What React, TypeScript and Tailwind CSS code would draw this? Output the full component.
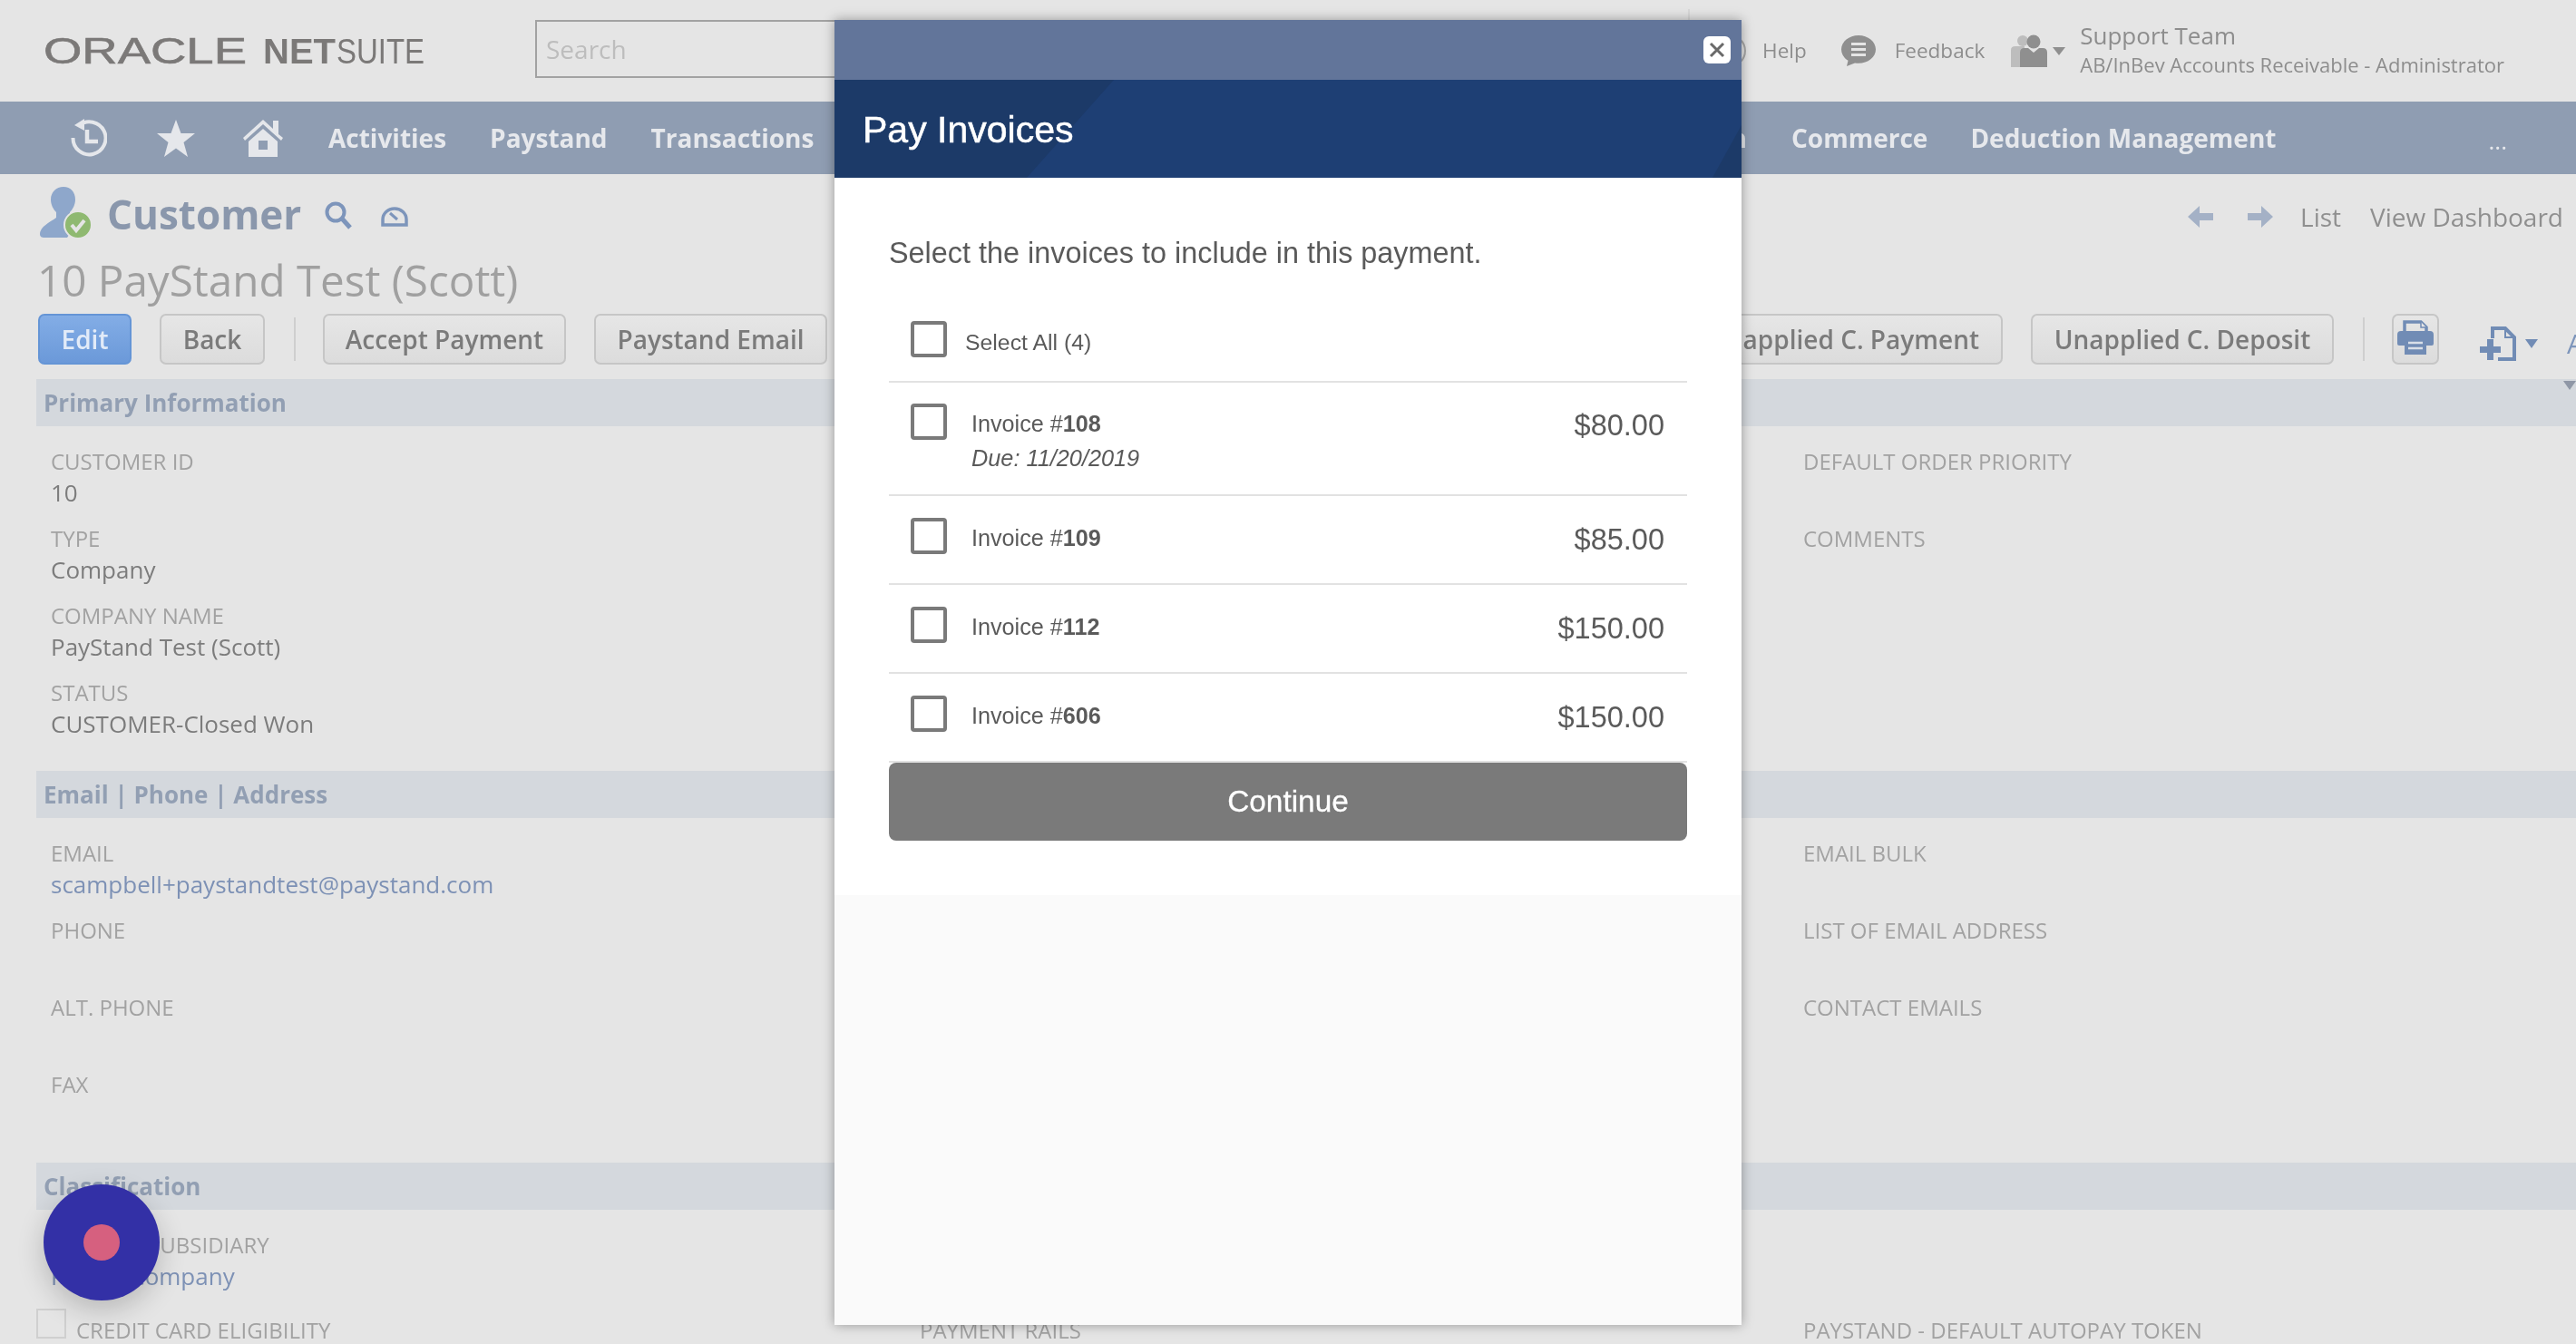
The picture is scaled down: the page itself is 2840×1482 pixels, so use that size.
import React from "react";

const sans = "font-['Open_Sans',sans-serif]";
const hel = "font-['Liberation_Sans',Arial,sans-serif]";

function Field({ label, value, link }: { label?: string; value?: string; link?: boolean }) {
  return (
    <div className="h-[85px]">
      <div className="h-[34px] text-[24px] leading-[34px] text-[#a2a2a2] whitespace-nowrap">{label}</div>
      <div className={`h-[34px] text-[26px] leading-[34px] whitespace-nowrap ${link ? "text-[#7d91b5]" : "text-[#7c7c7c]"}`}>{value}</div>
    </div>
  );
}

function Section({ title }: { title: string }) {
  return (
    <div className="ml-[40px] h-[52px] pl-[8px] flex items-center bg-[#d4d8dd] text-[26px] font-bold text-[#929fb3]">{title}</div>
  );
}

function Btn({ children, className = "" }: { children: React.ReactNode; className?: string }) {
  return (
    <div className={`h-[56px] shrink-0 flex items-center justify-center rounded-[7px] border-2 border-[#c6c6c6] bg-gradient-to-b from-[#e6e6e6] to-[#dcdcdc] text-[28px] font-semibold text-[#7b7b7b] whitespace-nowrap ${className}`}>
      {children}
    </div>
  );
}

function Check() {
  return <div className="w-[40px] h-[40px] shrink-0 rounded-[4px] border-[4px] border-[#7a7a7a] bg-white" />;
}

function Invoice({ no, amount, due }: { no: string; amount: string; due?: string }) {
  return (
    <div className={`flex justify-between pl-[24px] pr-[25px] border-b-2 border-[#e2e2e2] ${due ? "h-[125px] pt-[23px]" : "h-[98px] pt-[24px]"}`}>
      <div className="flex">
        <Check />
        <div className="ml-[27px]">
          <div className="h-[44px] text-[25.2px] leading-[44px] text-[#5a5a5a]">
            Invoice #<b className="font-bold">{no}</b>
          </div>
          {due && <div className="text-[25.3px] leading-[30px] italic text-[#5a5a5a] mt-[1px]">{due}</div>}
        </div>
      </div>
      <div className="text-[32.500px] leading-[50px] text-[#5a5a5a] mt-[-1px]">{amount}</div>
    </div>
  );
}

export default function App() {
  return (
    <div className={`relative w-[2840px] h-[1482px] overflow-hidden bg-[#e5e5e5] blur-[0.5px] ${sans}`}>
      {/* top bar */}
      <div className="h-[112px] flex items-center pl-[48px] pr-[79px]">
        <svg width="422" height="50" viewBox="0 0 422 50" className="shrink-0 mt-[-2px]">
          <text x="0" y="40" fontFamily="Liberation Sans" fontSize="40" fill="#7b7978" stroke="#7b7978" strokeWidth="0.6" textLength="224" lengthAdjust="spacingAndGlyphs">ORACLE</text>
          <text x="242" y="40" fontFamily="Liberation Sans" fontWeight="700" fontSize="38" fill="#7b7978" textLength="80" lengthAdjust="spacingAndGlyphs">NET</text>
          <text x="323" y="40" fontFamily="Liberation Sans" fontSize="38" fill="#7b7978" textLength="97" lengthAdjust="spacingAndGlyphs">SUITE</text>
        </svg>
        <div className="ml-[120px] w-[600px] h-[64px] mt-[-4px] border-2 border-[#a2a2a2] pl-[10px] flex items-center text-[28px] text-[#bdbdbd]">Search</div>
        <div className="ml-auto flex items-center">
          <div className="w-[2px] h-[92px] bg-[#d8d8d8] mr-[26px]" />
          <div className="w-[36px] h-[36px] rounded-full border-2 border-[#a8a8a8] mr-[18px]" />
          <div className="text-[22.500px] text-[#8d8d8d]">Help</div>
          <svg width="38" height="34" viewBox="0 0 38 34" className="ml-[38px]">
            <path d="M19 0C8.500 0 0 7 0 15.500c0 5 3 9.500 7.500 12.300L6 34l9-3.500c1.300.200 2.700.300 4 .300 10.500 0 19-6.800 19-15.300S29.500 0 19 0z" fill="#8f8f8f" />
            <path d="M11 9.500h16M11 15.500h16M11 21.500h16" stroke="#e5e5e5" strokeWidth="3" />
          </svg>
          <div className="ml-[21px] text-[22.500px] text-[#8d8d8d]">Feedback</div>
          <svg width="62" height="36" viewBox="0 0 62 36" className="ml-[29px]">
            <circle cx="13" cy="7" r="6" fill="#bdbdbd" />
            <path d="M0 17q0-4 5-4h10v23H0z" fill="#bdbdbd" />
            <circle cx="25" cy="8" r="7.500" fill="#8f8f8f" />
            <path d="M10 36V20q0-5 5-5h4l6 5 6-5h4q5 0 5 5v16z" fill="#8f8f8f" />
            <path d="M46 14h14l-7 9z" fill="#8f8f8f" />
          </svg>
          <div className="ml-[14px] mt-[-5px]">
            <div className="text-[26px] leading-[34px] text-[#8d8d8d]">Support Team</div>
            <div className="text-[22px] leading-[30px] text-[#8d8d8d]">AB/InBev Accounts Receivable - Administrator</div>
          </div>
        </div>
      </div>

      {/* nav */}
      <div className="h-[80px] bg-[#8f9db2] flex items-center pl-[78px] text-[28px] font-bold text-[#e6e8ec] whitespace-nowrap">
        <svg width="40" height="42" viewBox="0 0 40 42" className="shrink-0">
          <path d="M9 7.500A18 18 0 1 1 2.500 21" fill="none" stroke="#e5e7eb" strokeWidth="4" />
          <path d="M15 0v13L4 7z" fill="#e5e7eb" />
          <path d="M18 12v13h12" fill="none" stroke="#e5e7eb" strokeWidth="4.500" />
        </svg>
        <svg width="42" height="41" viewBox="0 0 42 41" className="ml-[55px] shrink-0">
          <path d="M21 0l5.500 15H42L29.500 25 34 41 21 31.500 8 41l4.500-16L0 15h15.500z" fill="#e5e7eb" />
        </svg>
        <svg width="46" height="42" viewBox="0 0 46 42" className="ml-[52px] shrink-0">
          <path d="M1 21L23 1l11 10V2h6v15l5 4-2 3L23 6 3 24z" fill="#e5e7eb" />
          <path d="M7 25L23 11l16 14v17H7z" fill="#e5e7eb" />
          <rect x="18" y="24" width="10" height="10" fill="#8f9db2" />
        </svg>
        <div className="ml-[49px] flex gap-[48px]">
          <span>Activities</span>
          <span>Paystand</span>
          <span>Transactions</span>
        </div>
        <div className="ml-auto flex gap-[47px] pr-[76px] items-center w-[865px] shrink-0">
          <span className="w-[210px] ml-[-259px] mr-[2px] text-right shrink-0">Customization</span>
          <span>Commerce</span>
          <span>Deduction Management</span>
          <span className="ml-auto font-normal text-[26px] leading-[24px] mt-[5px]">...</span>
        </div>
      </div>

      {/* record header */}
      <div className="h-[88px] flex items-center pl-[44px] pr-[14px]">
        <svg width="58" height="58" viewBox="0 0 58 58" className="shrink-0 mt-[-2px]">
          <path d="M26 0c8 0 13 6 13 14 0 6-3 11-6 14v4c4 2 8 3 10 6L30 56H5c-3 0-5-1-5-4 0-8 11-13 18-18v-6c-3-3-6-8-6-14C12 6 18 0 26 0z" fill="#8ea7cb" />
          <circle cx="42" cy="42" r="15" fill="#8fb971" stroke="#e5e5e5" strokeWidth="2" />
          <path d="M35 42l5 6 9-11" fill="none" stroke="#e5e5e5" strokeWidth="4" />
        </svg>
        <div className="ml-[16px] text-[44px] font-bold text-[#8a97ac]">Customer</div>
        <svg width="30" height="31" viewBox="0 0 30 31" className="ml-[26px] mt-[2px]">
          <circle cx="12" cy="12" r="9.500" fill="none" stroke="#7d95bb" strokeWidth="4" />
          <path d="M19 19l9 10" stroke="#7d95bb" strokeWidth="5" />
        </svg>
        <svg width="30" height="22" viewBox="0 0 30 22" className="ml-[32px] mt-[6px]">
          <path d="M2 20v-6a13 12 0 0 1 26 0v6z" fill="none" stroke="#7d95bb" strokeWidth="3.500" />
          <path d="M10 7l8 7" stroke="#7d95bb" strokeWidth="3" />
        </svg>
        <div className="ml-auto flex items-center text-[28px] text-[#8f8f8f] mt-[6px]">
          <svg width="28" height="24" viewBox="0 0 28 24"><path d="M13 0L0 12l13 12v-8h15V8H13z" fill="#a4b1c6" /></svg>
          <svg width="28" height="24" viewBox="0 0 28 24" className="ml-[38px]"><path d="M15 0l13 12-13 12v-8H0V8h15z" fill="#a4b1c6" /></svg>
          <span className="ml-[30px]">List</span>
          <span className="ml-[32px]">View Dashboard</span>
        </div>
      </div>
      <div className="h-[60px] pl-[41px] pb-[3px] flex items-center text-[47.600px] text-[#a0a0a0] whitespace-nowrap">10 PayStand Test (Scott)</div>

      {/* buttons */}
      <div className="mt-[6px] h-[56px] flex pl-[42px]">
        <Btn className="w-[103px] !border-[#6595d6] !from-[#83ade6] !to-[#6b99d9] !text-[#e2ebf8]">Edit</Btn>
        <Btn className="w-[116px] ml-[31px]">Back</Btn>
        <div className="ml-[32px] mt-[4px] w-[2px] h-[48px] bg-[#cfcfcf] shrink-0" />
        <Btn className="w-[268px] ml-[30px]">Accept Payment</Btn>
        <Btn className="w-[257px] ml-[31px]">Paystand Email</Btn>
        <Btn className="w-[330px] ml-[966px] !justify-end pr-[24px]">Unapplied C. Payment</Btn>
        <Btn className="w-[334px] ml-[31px]">Unapplied C. Deposit</Btn>
        <div className="ml-[32px] mt-[4px] w-[2px] h-[48px] bg-[#cfcfcf] shrink-0" />
        <Btn className="w-[52px] ml-[30px] items-start">
          <svg width="40" height="38" viewBox="0 0 40 38" className="mt-[5px]">
            <path d="M8 2V14h24V8l-6-6z" fill="none" stroke="#718cb5" strokeWidth="3.500" />
            <path d="M26 2v6h6" fill="#e5e5e5" stroke="#718cb5" strokeWidth="1.500" />
            <path d="M4 12h32q4 0 4 4v10q0 2-2 2h-6v-8H8v8H2q-2 0-2-2V16q0-4 4-4z" fill="#718cb5" />
            <path d="M8 19h24v19H8z" fill="#718cb5" />
            <path d="M12 25h16M12 31h16" stroke="#d9dfe8" strokeWidth="2.500" />
          </svg>
        </Btn>
        <svg width="66" height="38" viewBox="0 0 66 38" className="ml-[45px] mt-[14px] shrink-0">
          <path d="M14 13V2h14l10 10v24H20" fill="none" stroke="#718cb5" strokeWidth="4" />
          <path d="M28 2v10h10" fill="none" stroke="#718cb5" strokeWidth="2" />
          <path d="M8 14v8H0v7h8v8h7v-8h8v-7h-8v-8z" fill="#718cb5" />
          <path d="M50 14h14l-7 10z" fill="#718cb5" />
        </svg>
        <div className="ml-[30px] mt-[10px] text-[30px] text-[#7d95bb] whitespace-nowrap shrink-0">Actions</div>
      </div>

      {/* sections */}
      <div className="mt-[16px]">
        <div className="relative">
          <Section title="Primary Information" />
          <svg width="14" height="10" viewBox="0 0 14 10" className="absolute right-0 top-[2px]"><path d="M0 0h14l-7 10z" fill="#8f97a6" /></svg>
        </div>
        <div className="pl-[56px] pt-[22px] grid grid-cols-[958px_974px_1fr] h-[380px]">
          <div>
            <Field label="CUSTOMER ID" value="10" />
            <Field label="TYPE" value="Company" />
            <Field label="COMPANY NAME" value="PayStand Test (Scott)" />
            <Field label="STATUS" value="CUSTOMER-Closed Won" />
          </div>
          <div />
          <div>
            <Field label="DEFAULT ORDER PRIORITY" />
            <Field label="COMMENTS" />
          </div>
        </div>
        <Section title="Email | Phone | Address" />
        <div className="pl-[56px] pt-[22px] grid grid-cols-[958px_974px_1fr] h-[380px]">
          <div>
            <Field label="EMAIL" value="scampbell+paystandtest@paystand.com" link />
            <Field label="PHONE" />
            <Field label="ALT. PHONE" />
            <Field label="FAX" />
          </div>
          <div />
          <div>
            <Field label="EMAIL BULK" />
            <Field label="LIST OF EMAIL ADDRESS" />
            <Field label="CONTACT EMAILS" />
          </div>
        </div>
        <Section title="Classification" />
        <div className="pl-[56px] pt-[22px] grid grid-cols-[958px_974px_1fr]">
          <div>
            <Field label="PRIMARY SUBSIDIARY" value="Parent Company" link />
            <div className="flex ml-[-16px] mt-[2px]">
              <div className="w-[33px] h-[33px] border-2 border-[#cfcfcf] shrink-0" />
              <div className="ml-[11px] mt-[7px] text-[24px] leading-[34px] text-[#a2a2a2] whitespace-nowrap">CREDIT CARD ELIGIBILITY</div>
            </div>
          </div>
          <div className="pt-[94px] text-[24px] leading-[34px] text-[#a2a2a2]">PAYMENT RAILS</div>
          <div className="pt-[94px] text-[24px] leading-[34px] text-[#a2a2a2] whitespace-nowrap">PAYSTAND - DEFAULT AUTOPAY TOKEN</div>
        </div>
      </div>

      {/* modal */}
      <div className={`absolute left-[920px] top-[22px] w-[1000px] h-[1439px] flex flex-col bg-[#fafafa] shadow-[0_0_12px_rgba(0,0,0,0.35)] ${hel}`}>
        <div className="relative h-[66px] shrink-0 bg-[#62759a]">
          <div className="absolute left-[958px] top-[18px] w-[30px] h-[30px] rounded-[6px] bg-white flex items-center justify-center">
            <svg width="20" height="20" viewBox="0 0 20 20"><path d="M3 3l14 14M17 3L3 17" stroke="#6a6a6a" strokeWidth="3" /></svg>
          </div>
        </div>
        <div className="relative h-[108px] shrink-0 bg-[#1e3f74] flex items-center overflow-hidden">
          <svg width="1000" height="108" viewBox="0 0 1000 108" className="absolute left-0 top-0">
            <path d="M0 0H308L212 108H0z" fill="#1c3a68" />
            <path d="M1000 50V108H968z" fill="#1c3a68" />
          </svg>
          <div className="relative pl-[31px] mt-[3px] text-[41px] text-white [-webkit-text-stroke:0.5px_white]">Pay Invoices</div>
        </div>
        <div className="bg-white px-[60px] pt-[60px] pb-[60px] shrink-0">
          <div className="h-[44px] mt-[1px] mb-[-1px] text-[32.400px] leading-[44px] text-[#5a5a5a]">Select the invoices to include in this payment.</div>
          <div className="mt-[40px] h-[82px] pt-[14px] pl-[24px] flex border-b-2 border-[#e2e2e2]">
            <Check />
            <div className="ml-[20px] mt-[6px] text-[24.800px] leading-[36px] text-[#5a5a5a]">Select All (4)</div>
          </div>
          <Invoice no="108" amount="$80.00" due="Due: 11/20/2019" />
          <Invoice no="109" amount="$85.00" />
          <Invoice no="112" amount="$150.00" />
          <Invoice no="606" amount="$150.00" />
          <div className="h-[86px] rounded-[8px] bg-[#7a7a7a] flex items-center justify-center text-[33.400px] text-white [-webkit-text-stroke:0.3px_white]">Continue</div>
        </div>
      </div>

      {/* floating button */}
      <div className="absolute left-[48px] top-[1306px] w-[128px] h-[128px] rounded-full bg-[#3330a6] shadow-[0_10px_30px_rgba(0,0,0,0.2)] flex items-center justify-center">
        <div className="w-[40px] h-[40px] rounded-full bg-[#d6607f]" />
      </div>
    </div>
  );
}
